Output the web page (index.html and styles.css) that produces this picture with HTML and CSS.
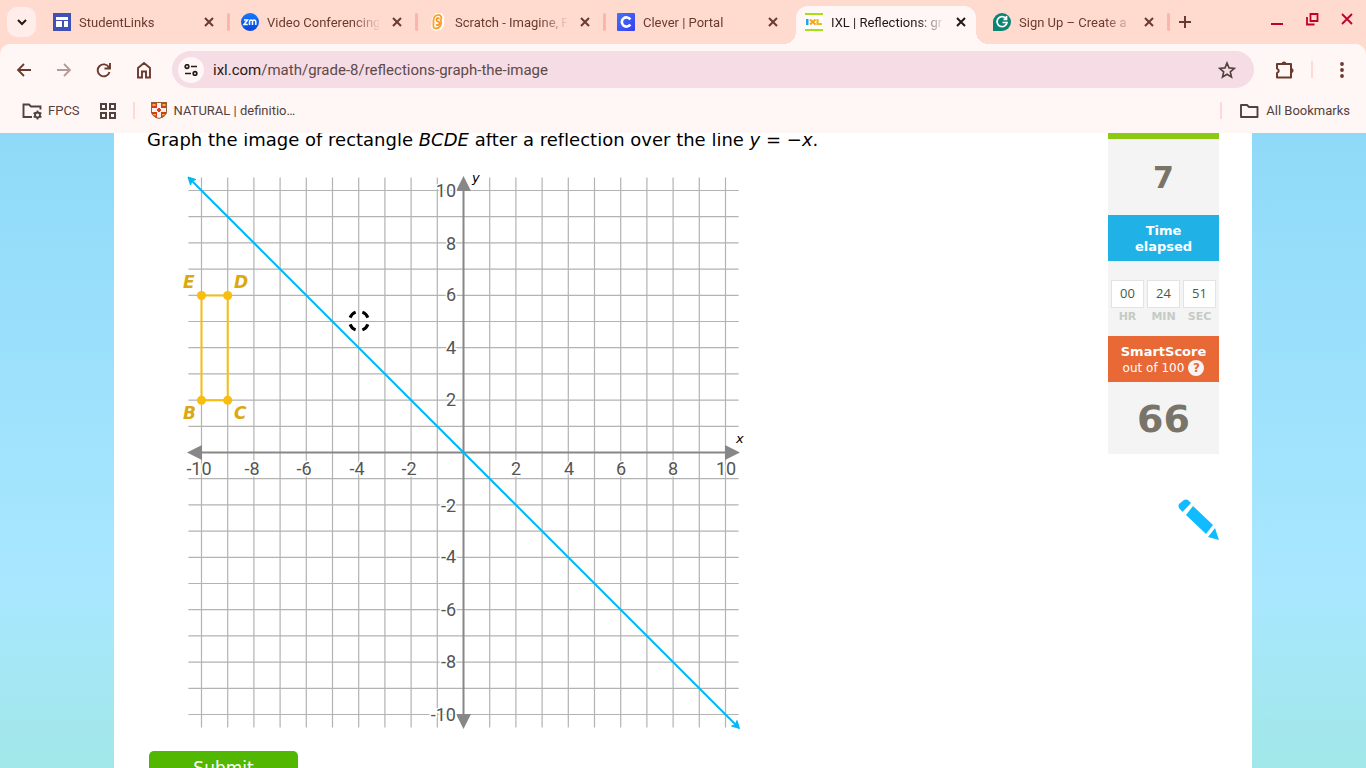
FILE: index.html
```html
<!DOCTYPE html>
<html lang="en">
<head>
<meta charset="utf-8">
<title>IXL | Reflections: graph the image</title>
<link rel="stylesheet" href="styles.css">
</head>
<body>
<header class="browser">
  <nav class="tabstrip" aria-label="Tabs">
    <button class="tab-search" aria-label="Search tabs"><svg width="12" height="8" viewBox="0 0 12 8"><path d="M2 2l4 4 4-4" fill="none" stroke="currentColor" stroke-width="2"/></svg></button>
    <div class="tabs">
      <div class="tab">
        <svg class="favicon" viewBox="0 0 18 18"><path fill="#3f51b5" d="M0 0h18v18H0z"/><path fill="#fff" d="M3 4h12v3H3zM3 8h6v6H3zM11 8h4v6h-4z"/></svg>
        <span class="tab-title">StudentLinks</span>
        <button class="close" aria-label="Close tab"><svg viewBox="0 0 16 16"><path d="M4 4l8 8M12 4l-8 8"/></svg></button>
      </div>
      <div class="tab">
        <svg class="favicon" viewBox="0 0 18 18"><defs><linearGradient id="zm" x2="0" y2="1"><stop stop-color="#147bff"/><stop offset="1" stop-color="#0845d8"/></linearGradient></defs><circle cx="9" cy="9" r="9" fill="url(#zm)"/><path d="M3 7h3.500L3 11.500h3.800M8.500 12V8.500q0-1.500 1.500-1.500t1.500 1.500V12M11.500 8.500q0-1.500 1.500-1.500t1.800 1.500V12" fill="none" stroke="#fff" stroke-width="1.500"/></svg>
        <span class="tab-title">Video Conferencing</span>
        <button class="close" aria-label="Close tab"><svg viewBox="0 0 16 16"><path d="M4 4l8 8M12 4l-8 8"/></svg></button>
      </div>
      <div class="tab">
        <svg class="favicon" viewBox="0 0 18 18"><path d="M7 0h6l2 4v8l-3 5-6 1-4-3 1-10z" fill="#fff"/><path d="M7 2.500q4-1.500 5 1 1 2-.500 3.500 1.500 4-.500 6.500-3 3-6 1.500-1-1-.500-5Q4 4 7 2.500z" fill="#fff8ea" stroke="#f7a233" stroke-width="1.800"/><path d="M10.500 5.500q-3-1-3 1t2.500 2.500q1.500 2-.500 3-1.500.500-2.500-.500" fill="none" stroke="#f7931e" stroke-width="1.600"/></svg>
        <span class="tab-title">Scratch - Imagine, P</span>
        <button class="close" aria-label="Close tab"><svg viewBox="0 0 16 16"><path d="M4 4l8 8M12 4l-8 8"/></svg></button>
      </div>
      <div class="tab tab-last">
        <svg class="favicon" viewBox="0 0 18 18"><defs><linearGradient id="cl" x2="1" y2="1"><stop stop-color="#4274f6"/><stop offset="1" stop-color="#3a3df0"/></linearGradient></defs><rect width="18" height="18" rx="1" fill="url(#cl)"/><path d="M13.300 6.500A4.600 4.600 0 1 0 13.300 11.500" fill="none" stroke="#fff" stroke-width="2.600"/></svg>
        <span class="tab-title">Clever | Portal</span>
        <button class="close" aria-label="Close tab"><svg viewBox="0 0 16 16"><path d="M4 4l8 8M12 4l-8 8"/></svg></button>
      </div>
      <div class="tab tab-active">
        <svg class="favicon" viewBox="0 0 18 18"><path fill="#fff" d="M0 2h18v14H0z"/><path fill="#a6e010" d="M0 0h18v2H0zM0 16h18v2H0z"/><path fill="#1aa9e0" d="M1 6h2.500v6H1z"/><path d="M5 6.500l5.500 5M10.500 6.500L5 11.500" stroke="#f9a51a" stroke-width="2.200"/><path d="M12.500 6v5H17" fill="none" stroke="#f5b81a" stroke-width="2.200"/></svg>
        <span class="tab-title">IXL | Reflections: gr</span>
        <button class="close" aria-label="Close tab"><svg viewBox="0 0 16 16"><path d="M4 4l8 8M12 4l-8 8"/></svg></button>
      </div>
      <div class="tab">
        <svg class="favicon" viewBox="0 0 18 18"><path d="M9 0a9 9 0 1 1 0 18H0V9a9 9 0 0 1 9-9z" fill="#0b8473"/><path d="M12.800 5.300A5 5 0 1 0 14 9.500H9.500M13.500 3v3.300h-3" fill="none" stroke="#fff" stroke-width="1.700"/></svg>
        <span class="tab-title">Sign Up – Create a</span>
        <button class="close" aria-label="Close tab"><svg viewBox="0 0 16 16"><path d="M4 4l8 8M12 4l-8 8"/></svg></button>
      </div>
    </div>
    <button class="icon-btn new-tab" aria-label="New tab"><svg width="14" height="14" viewBox="0 0 14 14"><path d="M7 1v12M1 7h12" stroke="currentColor" stroke-width="2"/></svg></button>
    <div class="window-controls">
      <button class="icon-btn" aria-label="Minimize"><svg width="14" height="14" viewBox="0 0 14 14"><path d="M1 12h12" stroke="currentColor" stroke-width="2"/></svg></button>
      <button class="icon-btn" aria-label="Restore"><svg width="14" height="14" viewBox="0 0 14 14" fill="none" stroke="currentColor" stroke-width="1.800"><path d="M5.500 2h7v7h-7zM2 5v7.500h7.500"/></svg></button>
      <button class="icon-btn" aria-label="Close window"><svg width="14" height="14" viewBox="0 0 14 14"><path d="M2 2l10 10M12 2L2 12" stroke="currentColor" stroke-width="1.800"/></svg></button>
    </div>
  </nav>
  <div class="toolbar">
    <button class="icon-btn" aria-label="Back"><svg width="16" height="16" viewBox="0 0 16 16" fill="none" stroke="currentColor" stroke-width="1.800"><path d="M15 8H2M8 2L2 8l6 6"/></svg></button>
    <button class="icon-btn" aria-label="Forward" disabled><svg width="16" height="16" viewBox="0 0 16 16" fill="none" stroke="currentColor" stroke-width="1.800"><path d="M1 8h13M8 2l6 6-6 6"/></svg></button>
    <button class="icon-btn" aria-label="Reload"><svg width="16" height="16" viewBox="0 0 16 16" fill="none" stroke="currentColor" stroke-width="1.900"><path d="M13.500 10A6 6 0 1 1 13 5.500M14 1v5.500H8.500"/></svg></button>
    <button class="icon-btn" aria-label="Home"><svg width="16" height="18" viewBox="0 0 16 18" fill="none" stroke="currentColor" stroke-width="1.900"><path d="M2 7l6-5 6 5v9.500h-4v-6H6v6H2z"/></svg></button>
    <div class="omnibox">
      <button class="site-info" aria-label="Site information"><svg width="14" height="12" viewBox="0 0 14 12" fill="none" stroke="currentColor" stroke-width="1.700"><circle cx="3" cy="2.500" r="1.800"/><path d="M7 2.500h6M1 9.500h6"/><circle cx="11" cy="9.500" r="1.800"/></svg></button>
      <a class="url" href="#problem"><span class="host">ixl.com</span>/math/grade-8/reflections-graph-the-image</a>
      <button class="icon-btn star" aria-label="Bookmark this tab"><svg width="18" height="18" viewBox="0 0 18 18"><path d="M9 2l2 4.900 5.300.400-4 3.500 1.200 5.200L9 13.200 4.500 16l1.200-5.200-4-3.500L7 6.900z" fill="none" stroke="currentColor" stroke-width="1.600"/></svg></button>
    </div>
    <button class="icon-btn ext" aria-label="Extensions"><svg width="20" height="20" viewBox="0 0 20 20"><path d="M3 4h14v13.500H3v-4.500q3.500-2 0-4.500z" fill="none" stroke="currentColor" stroke-width="2" stroke-linejoin="round"/><path d="M7.500 4a2.500 2.500 0 0 1 5 0zM17 8a2.500 2.500 0 0 1 0 5z" fill="currentColor"/></svg></button>
    <span class="divider"></span>
    <button class="icon-btn menu" aria-label="Menu"><svg width="4" height="18" viewBox="0 0 4 18" fill="currentColor"><circle cx="2" cy="3" r="1.900"/><circle cx="2" cy="9" r="1.900"/><circle cx="2" cy="15" r="1.900"/></svg></button>
  </div>
  <nav class="bookmarks" aria-label="Bookmarks">
    <a class="bookmark" href="#fpcs"><svg width="20" height="18" viewBox="0 0 20 18" fill="none" stroke="currentColor" stroke-width="1.900"><path d="M10 15H1.500V2.500h5.500l2 2h9.500v3"/><circle cx="15.500" cy="13" r="2.500"/><path d="M15.500 8.500v2M15.500 15.500v2M11.600 10.800l1.700 1M17.700 14.200l1.700 1M11.600 15.200l1.700-1M17.700 11.800l1.700-1" stroke-width="1.700"/></svg>FPCS</a>
    <a class="bookmark apps" href="#apps" aria-label="Apps"><svg width="16" height="16" viewBox="0 0 16 16" fill="none" stroke="currentColor" stroke-width="2"><path d="M1 1h5v5H1zM10 1h5v5h-5zM1 10h5v5H1zM10 10h5v5h-5z"/></svg></a>
    <span class="divider"></span>
    <a class="bookmark natural" href="#natural"><svg width="16" height="17" viewBox="0 0 16 17"><path d="M0 0h16v10q-1 5-8 7-7-2-8-7z" fill="#d83a20"/><path d="M6 0h4v17H6zM0 6h16v4H0z" fill="#f4f1ee"/><path d="M1.500 2h3v2h-3zM11.500 2h3v2h-3zM2 12h3v1.500H2zM11 12h3v1.500h-3z" fill="#f2b52d"/><path d="M7 6h2v1h1v2H9v1H7V9H6V7h1z" fill="#d83a20"/><path d="M.500.500h15V10q-1 4.500-7.500 6.500Q1.500 14.500.500 10z" fill="none" stroke="#93603c"/></svg>NATURAL | definitio…</a>
    <span class="divider all-divider"></span>
    <a class="bookmark all" href="#all"><svg width="19" height="16" viewBox="0 0 19 16" fill="none" stroke="currentColor" stroke-width="1.900"><path d="M2 2h5l2 2h8.500v10H1V2z" stroke-linejoin="round"/></svg>All Bookmarks</a>
  </nav>
</header>
<main class="viewport">
  <div class="page">
    <section class="problem" id="problem">
      <p class="question">Graph the image of rectangle <i>BCDE</i> after a reflection over the line <i>y</i> = <i>−x</i>.</p>
      <svg class="graph" width="580" height="568" viewBox="174 166 580 568" role="img" aria-label="Coordinate plane with rectangle BCDE and the line y = -x">
        <path class="grid" transform="translate(463.500 452.500) scale(26.200)" d="M-10-10.500v21M-9-10.500v21M-8-10.500v21M-7-10.500v21M-6-10.500v21M-5-10.500v21M-4-10.500v21M-3-10.500v21M-2-10.500v21M-1-10.500v21M1-10.500v21M2-10.500v21M3-10.500v21M4-10.500v21M5-10.500v21M6-10.500v21M7-10.500v21M8-10.500v21M9-10.500v21M10-10.500v21M-10.500-10h21M-10.500-9h21M-10.500-8h21M-10.500-7h21M-10.500-6h21M-10.500-5h21M-10.500-4h21M-10.500-3h21M-10.500-2h21M-10.500-1h21M-10.500 1h21M-10.500 2h21M-10.500 3h21M-10.500 4h21M-10.500 5h21M-10.500 6h21M-10.500 7h21M-10.500 8h21M-10.500 9h21M-10.500 10h21"/>
        <path class="axis" d="M195 452.500h537M463.500 185v535"/>
        <path class="axis-head" d="M187 452.500l15-7.500v15zM740 452.500l-15-7.500v15zM463.500 176l7.500 15h-15zM463.500 729l7.500-15h-15z"/>
        <g class="ticks x-ticks">
          <text x="199" y="475">-10</text><text x="252" y="475">-8</text><text x="304" y="475">-6</text><text x="357" y="475">-4</text><text x="409" y="475">-2</text>
          <text x="516" y="475">2</text><text x="569" y="475">4</text><text x="621" y="475">6</text><text x="673" y="475">8</text><text x="726" y="475">10</text>
        </g>
        <g class="ticks y-ticks">
          <text x="456" y="197">10</text><text x="456" y="250">8</text><text x="456" y="301">6</text><text x="456" y="354">4</text><text x="456" y="406">2</text>
          <text x="456" y="512">-2</text><text x="456" y="563">-4</text><text x="456" y="616">-6</text><text x="456" y="668">-8</text><text x="456" y="721">-10</text>
        </g>
        <text class="axis-name" x="472" y="182">y</text>
        <text class="axis-name" x="736" y="443">x</text>
        <path class="mirror" d="M190 179l547 547"/>
        <path class="mirror-head" d="M188 177l8 2.500-4 1.500-1.500 4zM739.500 728.500l-8-2.500 4-1.500 1.500-4z"/>
        <path class="shape" d="M201.500 295.500h26.200v104.800h-26.200z"/>
        <g class="vertices"><circle cx="201.500" cy="295.500" r="4.500"/><circle cx="227.700" cy="295.500" r="4.500"/><circle cx="201.500" cy="400.300" r="4.500"/><circle cx="227.700" cy="400.300" r="4.500"/></g>
        <g class="names"><text x="183" y="288">E</text><text x="234" y="288">D</text><text x="183" y="419">B</text><text x="234" y="419">C</text></g>
        <circle class="cursor" cx="359" cy="321" r="9.500" pathLength="60"/>
      </svg>
      <button class="submit">Submit</button>
    </section>
    <aside class="stats">
      <div class="green-bar"></div>
      <div class="count">7</div>
      <h2 class="head head-time">Time<br>elapsed</h2>
      <div class="timer">
        <div class="unit"><span class="digits">00</span><span class="label">HR</span></div>
        <div class="unit"><span class="digits">24</span><span class="label">MIN</span></div>
        <div class="unit"><span class="digits">51</span><span class="label">SEC</span></div>
      </div>
      <h2 class="head head-score">SmartScore<span class="sub">out of 100 <button class="help" aria-label="About SmartScore">?</button></span></h2>
      <div class="score">66</div>
      <button class="icon-btn pencil" aria-label="Scratchpad"><svg width="41" height="41" viewBox="0 0 41 41" fill="#10bcff"><path d="M1 5l5-4q2-1 4 0l3 3-8.500 9L1 9Q0 7 1 5zM15 7l20 19-7 9L8 16zM37 29l4 12-11-3z"/></svg></button>
    </aside>
  </div>
</main>
</body>
</html>
```
FILE: styles.css
```css
* { box-sizing: border-box; }
body {
  margin: 0;
  height: 100vh;
  display: flex;
  flex-direction: column;
  overflow: hidden;
  font-family: Roboto, sans-serif;
  color: #53413e;
}
button { padding: 0; border: 0; background: none; color: inherit; font: inherit; }
a { color: inherit; text-decoration: none; }
svg { display: block; flex: none; }

.browser { flex: none; background: #ffdacf; }
.tabstrip { display: flex; height: 44px; padding-left: 7px; color: #6b3a2e; }
.tab-search {
  width: 29px; height: 30px; margin-top: 7px;
  display: grid; place-items: center;
  border-radius: 10px; background: #ffedea; color: #2b1511;
}
.tabs { display: flex; margin-left: 7px; }
.tab {
  position: relative;
  width: 188px;
  display: flex; align-items: center;
  padding: 0 14px 0 10px;
  font-size: 13px;
}
.tab::after {
  content: "";
  position: absolute; right: 1px; top: 13px;
  width: 3px; height: 18px; border-radius: 2px;
  background: #ffb3ae;
}
.tab-last::after { display: none; }
.favicon { width: 18px; height: 18px; }
.tab-title {
  width: 112px; margin: 0 10px 0 8px;
  overflow: hidden; white-space: nowrap;
  mask-image: linear-gradient(to right, #000 86px, transparent 114px);
}
.close { width: 16px; height: 16px; flex: none; }
.close svg { width: 16px; height: 16px; stroke: currentColor; stroke-width: 2; }
.tab-active { color: #241917; z-index: 0; }
.tab-active::before {
  content: "";
  position: absolute; z-index: -1; left: 1px; right: 7px; top: 6px; bottom: 0;
  border-radius: 12px 12px 0 0;
  background: #fff7f5;
}
.tab-active::after {
  z-index: -1; left: -11px; right: -5px; top: auto; bottom: 0;
  width: auto; height: 12px; border-radius: 0;
  background:
    radial-gradient(circle at 0 0, transparent 12px, #fff7f5 12px) left / 12px 12px no-repeat,
    radial-gradient(circle at 100% 0, transparent 12px, #fff7f5 12px) right / 12px 12px no-repeat;
}
.icon-btn { display: grid; place-items: center; flex: none; }
.new-tab { margin-left: 7px; }
.window-controls { display: flex; align-items: center; gap: 21px; margin: 0 12px 6px auto; color: #c20029; }

.toolbar {
  display: flex; align-items: center;
  height: 51px; padding: 0 22px 0 16px;
  border-radius: 10px 10px 0 0;
  background: #fff7f5; color: #6b3a2e;
}
.toolbar > .icon-btn { margin-right: 24px; }
.toolbar > .icon-btn:disabled { color: #b39c97; }
.omnibox {
  flex: 1; height: 37px;
  display: flex; align-items: center;
  padding: 0 18px 0 6px;
  border-radius: 19px;
  background: #f6dce5;
}
.toolbar > .icon-btn:nth-child(4) { margin-right: 20px; }
.site-info { width: 26px; height: 26px; border-radius: 50%; display: grid; place-items: center; background: #fff7f5; color: #241917; }
.url { flex: 1; margin-left: 9px; font-size: 15px; color: #5d4a49; }
.host { color: #241917; }
.star { color: #53413e; }
.toolbar > .ext { margin: 0 17px 0 20px; }
.toolbar > .menu { margin: 0 0 0 27px; }
.divider { width: 2px; height: 17px; background: #ffdad5; }

.bookmarks { display: flex; align-items: center; height: 38px; padding: 0 16px 7px 22px; background: #fff7f5; font-size: 13px; }
.bookmark { display: flex; align-items: center; gap: 6px; }
.apps { margin: 0 17px 0 20px; }
.natural { margin-left: 16px; gap: 7px; }
.all { gap: 7px; }
.all-divider { margin: 0 18px 0 auto; }

.viewport { flex: 1; overflow: hidden; background: linear-gradient(#8fdaf8, #a9e7ff 72%, #a1e7e8); }
.page {
  display: flex; justify-content: space-between;
  max-width: 1138px; min-height: 100%;
  margin: 0 auto; padding: 0 33px;
  background: #fff;
  font-family: "DejaVu Sans", Verdana, sans-serif;
}
.question { margin: 0; font-size: 18px; line-height: 14px; color: #000; }
.graph { margin: 19px 0 17px 27px; }
.grid { fill: none; stroke: #b3b3b3; stroke-width: 1.2px; vector-effect: non-scaling-stroke; }
.axis { stroke: #878787; stroke-width: 2px; }
.axis-head { fill: #878787; }
.ticks { font: 18px Roboto, sans-serif; fill: #555; stroke: #fff; stroke-width: 3px; paint-order: stroke; }
.x-ticks { text-anchor: middle; }
.y-ticks { text-anchor: end; }
.axis-name { font-size: 13px; font-style: italic; fill: #000; }
.mirror { stroke: #00b8f5; stroke-width: 2px; }
.mirror-head { fill: #00b8f5; stroke: #00b8f5; stroke-width: 1px; }
.shape { fill: none; stroke: #f8bd0f; stroke-width: 2px; }
.vertices { fill: #f8bd0f; }
.names { font-size: 17px; font-weight: bold; font-style: italic; fill: #dba90f; }
.cursor { fill: none; stroke: #000; stroke-width: 3px; stroke-dasharray: 8 7; stroke-dashoffset: -3.5; }
.submit { display: block; width: 149px; height: 34px; margin-left: 2px; border-radius: 5px; background: #52b700; color: #fff; font-size: 17px; }

.stats { width: 111px; flex: none; text-align: center; color: #787469; font-weight: bold; }
.green-bar { height: 6px; background: #8cc814; }
.count { height: 76px; line-height: 78px; font-size: 30px; background: #f4f4f4; }
.head { margin: 0; height: 46px; padding-top: 8px; font-size: 13px; line-height: 16px; color: #fff; }
.head-time { background: #20b2e7; }
.head-score { background: #e86935; }
.sub { display: flex; justify-content: center; align-items: center; gap: 4px; font-size: 12px; line-height: 14px; font-weight: normal; }
.help { width: 16px; height: 16px; flex: none; border-radius: 50%; background: #f4f4f4; color: #e86935; font-weight: bold; line-height: 16px; }
.timer { display: flex; justify-content: space-between; height: 75px; padding: 19px 3px 0; background: #f4f4f4; }
.unit { display: flex; flex-direction: column; width: 33px; }
.digits { height: 28px; border: 1px solid #e3e3e3; background: #fff; color: #4a5a48; font: 13px/25px "Open Sans", sans-serif; }
.label { font-size: 11px; line-height: 18px; color: #c5cbc5; }
.score { height: 72px; line-height: 74px; font-size: 38px; background: #f4f4f4; }
.pencil { margin: 45px 0 0 auto; }
```
